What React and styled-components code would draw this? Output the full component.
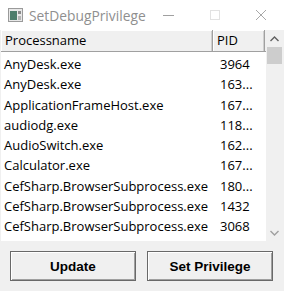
import React from "react";
import styled, { createGlobalStyle } from "styled-components";

const processes = [
  ["AnyDesk.exe", "3964"],
  ["AnyDesk.exe", "163..."],
  ["ApplicationFrameHost.exe", "167..."],
  ["audiodg.exe", "118..."],
  ["AudioSwitch.exe", "162..."],
  ["Calculator.exe", "167..."],
  ["CefSharp.BrowserSubprocess.exe", "180..."],
  ["CefSharp.BrowserSubprocess.exe", "1432"],
  ["CefSharp.BrowserSubprocess.exe", "3068"],
  ["CefSharp.BrowserSubprocess.exe", "3172"],
];

function AppIcon() {
  return (
    <svg width="15" height="14" viewBox="0 0 15 14">
      <rect x="0.5" y="0.5" width="14" height="13" fill="#e8e8e8" stroke="#9a9a9a" />
      <rect x="2" y="3" width="7" height="9" fill="#4d7d6b" />
      <rect x="10" y="3" width="3" height="3" fill="#8a8a8a" />
      <rect x="10" y="8" width="3" height="4" fill="#b5b5b5" />
    </svg>
  );
}

function App() {
  return (
    <>
      <Global />
      <Window>
        <TitleBar>
          <AppIcon />
          <Title>SetDebugPrivilege</Title>
          <Captions>
            <CaptionBtn>
              <svg width="12" height="12" viewBox="0 0 12 12">
                <line x1="0" y1="6.5" x2="11" y2="6.5" stroke="#a0a0a0" />
              </svg>
            </CaptionBtn>
            <CaptionBtn>
              <svg width="12" height="12" viewBox="0 0 12 12">
                <rect x="1.5" y="1.5" width="9" height="9" fill="none" stroke="#e2e2e2" />
              </svg>
            </CaptionBtn>
            <CaptionBtn>
              <svg width="12" height="12" viewBox="0 0 12 12">
                <path d="M1 1 L11 11 M11 1 L1 11" stroke="#a8a8a8" strokeWidth="1" />
              </svg>
            </CaptionBtn>
          </Captions>
        </TitleBar>

        <ListView>
          <ListBody>
            <Header>
              <HeadCell $w={212}>Processname</HeadCell>
              <HeadCell $w={52}>PID</HeadCell>
              <HeadFill />
            </Header>
            <Rows>
              {processes.map(([name, pid], i) => (
                <Row key={i}>
                  <NameCell>{name}</NameCell>
                  <PidCell>{pid}</PidCell>
                </Row>
              ))}
            </Rows>
          </ListBody>
          <ScrollBar>
            <Arrow>
              <svg width="9" height="6" viewBox="0 0 9 6">
                <path d="M0.5 5 L4.5 1 L8.5 5" fill="none" stroke="#606060" strokeWidth="1.4" />
              </svg>
            </Arrow>
            <Track>
              <Thumb />
            </Track>
            <Arrow>
              <svg width="9" height="6" viewBox="0 0 9 6">
                <path d="M0.5 1 L4.5 5 L8.5 1" fill="none" stroke="#a0a0a0" strokeWidth="1.4" />
              </svg>
            </Arrow>
          </ScrollBar>
        </ListView>

        <Footer>
          <Button>Update</Button>
          <Button>Set Privilege</Button>
        </Footer>
      </Window>
    </>
  );
}

export default App;

const Global = createGlobalStyle`
  html, body {
    margin: 0;
    padding: 0;
    background: #f0f0f0;
  }
  body {
    font-family: "Open Sans", "Noto Sans", sans-serif;
  }
`;

const Window = styled.div`
  width: 284px;
  height: 291px;
  display: flex;
  flex-direction: column;
  background: #f0f0f0;
  overflow: hidden;
`;

const TitleBar = styled.div`
  height: 30px;
  background: #ffffff;
  display: flex;
  align-items: center;
  padding-left: 8px;
  flex-shrink: 0;
`;

const Title = styled.span`
  margin-left: 6px;
  font-size: 13.8px;
  color: #8f8f8f;
`;

const Captions = styled.div`
  margin-left: auto;
  display: flex;
  height: 100%;
`;

const CaptionBtn = styled.div`
  width: 46px;
  display: flex;
  align-items: center;
  justify-content: center;
  margin-top: -1px;
`;

const ListView = styled.div`
  height: 211px;
  margin: 0 1px 0 1px;
  background: #ffffff;
  display: flex;
  flex-shrink: 0;
`;

const ListBody = styled.div`
  flex: 1;
  overflow: hidden;
`;

const Header = styled.div`
  display: flex;
  height: 21px;
  background: #f0f0f0;
  border-bottom: 1px solid #a0a0a0;
`;

const HeadCell = styled.div`
  width: ${(p) => p.$w}px;
  box-sizing: border-box;
  padding-left: 4px;
  font-size: 13px;
  line-height: 21px;
  color: #000;
  border-right: 1px solid #a0a0a0;
  box-shadow: inset 1px 1px #ffffff, inset -1px 0 #cfcfcf;
`;

const HeadFill = styled.div`
  flex: 1;
`;

const Rows = styled.div`
  padding-top: 2px;
`;

const Row = styled.div`
  display: flex;
  height: 20.25px;
  align-items: center;
  font-size: 13px;
  color: #000;
  white-space: nowrap;
`;

const NameCell = styled.div`
  width: 215px;
  padding-left: 3px;
  box-sizing: border-box;
  overflow: hidden;
`;

const PidCell = styled.div`
  padding-left: 4px;
`;

const ScrollBar = styled.div`
  width: 17px;
  background: #f0f0f0;
  display: flex;
  flex-direction: column;
`;

const Arrow = styled.div`
  height: 17px;
  display: flex;
  align-items: center;
  justify-content: center;
`;

const Track = styled.div`
  flex: 1;
  padding: 0 1px;
`;

const Thumb = styled.div`
  height: 17px;
  background: #cdcdcd;
`;

const Footer = styled.div`
  display: flex;
  gap: 11px;
  padding: 10px 11px 0 10px;
`;

const Button = styled.button`
  flex: 1;
  height: 30px;
  background: #f0f0f0;
  border: 1px solid #696969;
  box-shadow: inset 1px 1px #ffffff, inset -1px -1px #a0a0a0;
  font-family: "Liberation Sans", Arial, sans-serif;
  font-weight: bold;
  font-size: 13.5px;
  color: #000;
  padding: 0;
`;
